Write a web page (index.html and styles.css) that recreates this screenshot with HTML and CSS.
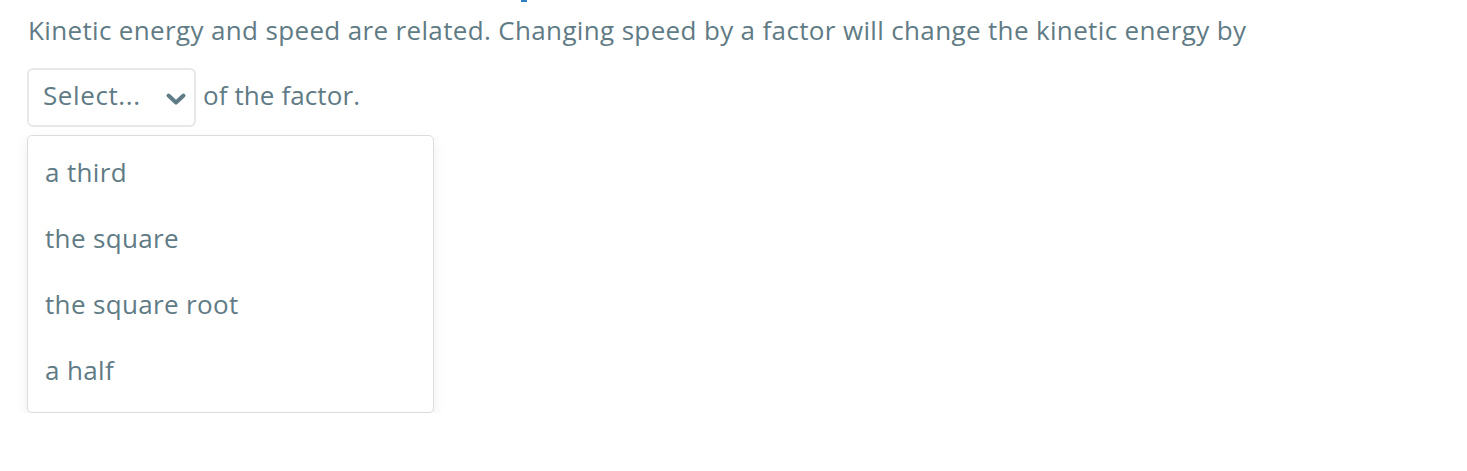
FILE: index.html
```html
<!DOCTYPE html>
<html>
<head>
<meta charset="utf-8">
<link rel="stylesheet" href="styles.css">
</head>
<body>
<div class="page">
  <div class="heading-tail"><span class="tail-mark"></span></div>
  <p class="prompt">Kinetic energy and speed are related. Changing speed by a factor will change the kinetic energy by</p>
  <div class="answer-row">
    <div class="select">
      <span class="select-label">Select...</span>
      <svg class="chevron" width="22" height="14" viewBox="0 0 22 14"><path d="M3.5 3.5 L11 10.5 L18.5 3.5" fill="none" stroke="#5f7b85" stroke-width="4" stroke-linecap="round" stroke-linejoin="round"/></svg>
    </div>
    <span class="suffix">of the factor.</span>
  </div>
  <div class="menu">
    <div class="option">a third</div>
    <div class="option">the square</div>
    <div class="option">the square root</div>
    <div class="option">a half</div>
  </div>
</div>
</body>
</html>
```
FILE: styles.css
```css
html, body {
  margin: 0;
  padding: 0;
  background: #ffffff;
}
body {
  font-family: "Open Sans", "Noto Sans", sans-serif;
  color: #5f7b85;
}
.page {
  padding: 0 0 0 27px;
}
.heading-tail {
  height: 2px;
  overflow: hidden;
}
.tail-mark {
  display: block;
  width: 6px;
  height: 2px;
  margin-left: 494px;
  background: #2d7fc1;
}
.prompt {
  margin: 0 0 0 1px;
  padding-top: 11px;
  font-size: 26px;
  line-height: 34px;
  letter-spacing: 0.35px;
}
.answer-row {
  display: flex;
  align-items: center;
  gap: 7px;
  margin-top: 21px;
}
.select {
  box-sizing: border-box;
  width: 169px;
  height: 59px;
  border: 2px solid #e8e8e8;
  border-radius: 6px;
  display: flex;
  align-items: center;
  justify-content: space-between;
  padding: 0 7px 0 14px;
  font-size: 26px;
  letter-spacing: 0.35px;
}
.select-label {
  margin-bottom: 5px;
  letter-spacing: 0.6px;
}
.chevron {
  display: block;
  margin-top: 2px;
}
.suffix {
  font-size: 26px;
  letter-spacing: 0.1px;
  margin-bottom: 5px;
}
.menu {
  box-sizing: border-box;
  width: 407px;
  height: 278px;
  margin-top: 8px;
  padding-top: 13px;
  background: #ffffff;
  border: 1px solid #dcdcdc;
  border-radius: 5px;
  box-shadow: 0 6px 14px rgba(0, 0, 0, 0.07);
}
.option {
  height: 66px;
  line-height: 46px;
  padding-left: 17px;
  font-size: 26px;
  letter-spacing: 0.35px;
}
```
